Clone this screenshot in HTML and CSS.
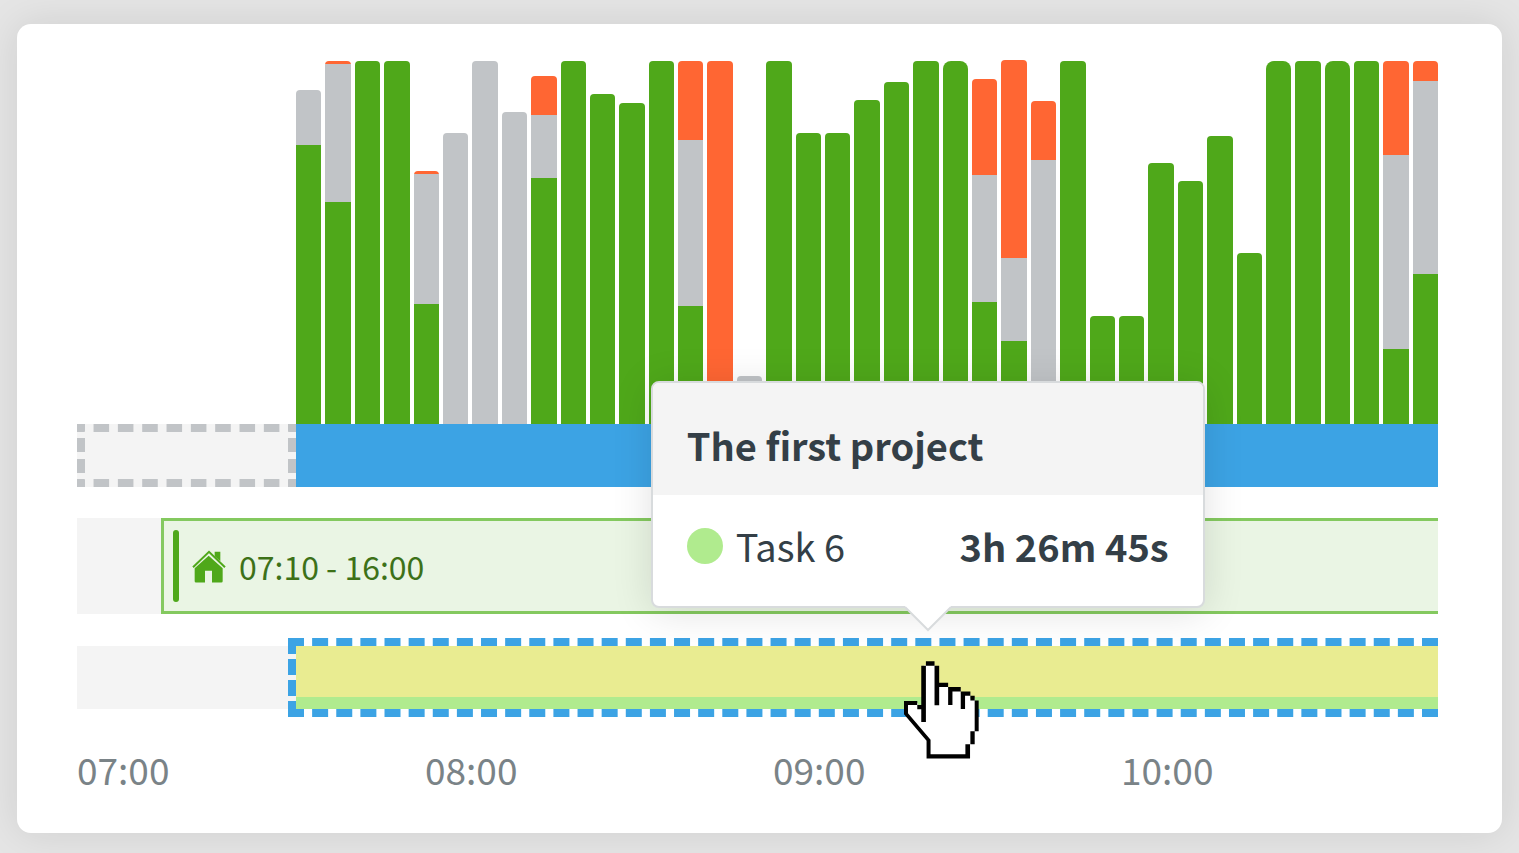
FILE: index.html
```html
<!DOCTYPE html>
<html lang="en">
<head>
    <meta charset="UTF-8">
    <meta name="viewport" content="width=device-width, initial-scale=1.0">
    <title>Timeline</title>
    <link rel="stylesheet" href="styles.css">
</head>
<body>

<main class="card">
    <div class="activity">
        <div class="idle"></div>
        <div class="tracked">
            <div class="bars" id="bars"></div>
            <div class="computer-time"></div>
        </div>
    </div>

    <div class="schedule">
        <div class="shift">
            <span class="shift-mark"></span>
            <svg class="home-icon" viewBox="0 0 102 98" aria-hidden="true">
                <path d="M3 51 L51 5 L99 51" fill="none" stroke="#4fa81a" stroke-width="6"/>
                <path d="M68 5 H85 V33 L68 18 Z"/>
                <path d="M8 54 L50 17 L92 54 V93 Q92 97 88 97 H60 V62 H39 V97 H12 Q8 97 8 93 Z"/>
            </svg>
            <span class="shift-time">07:10 - 16:00</span>
        </div>
    </div>

    <div class="tasks">
        <div class="task-range">
            <div class="task-main"></div>
            <div class="task-extra"></div>
        </div>

        <div class="tooltip">
            <h2>The first project</h2>
            <div class="tooltip-row">
                <span class="dot"></span>
                <span>Task 6</span>
                <strong>3h 26m 45s</strong>
            </div>
            <svg class="tooltip-arrow" viewBox="0 0 46 28" aria-hidden="true">
                <path class="arrow-fill" d="M0 0 H46 V2 L23 26 L0 2 Z"/>
                <path class="arrow-line" d="M0 2 L23 25 L46 2"/>
            </svg>
        </div>

        <svg class="pointer" viewBox="0 0 226 294" aria-hidden="true">
            <path fill="#fff" d="M66 12 H94 V70 H133 V84 H171 V98 H200 V112 H214 V211 H202 V250 H190 V286 H74 V240 L8 158 V126 H42 V138 H60 V12 Z"/>
            <path d="M66 0h26v14h-26z M52 14h14v169h-14z M92 14h14v119h-14z M106 65h27v13h-27z M133 78h38v13h-25v41h-13z M171 91h29v13h-16v40h-13z M200 104h13v14h-13z M213 118h12v93h-12z M200 211h13v39h-13z M185 250h14v43h-131v-53l-68-80v-40h40v12h-28v25l68 80v43h105z M40 132h13v13h-13z"/>
        </svg>
    </div>

    <div class="axis">
        <time>07:00</time>
        <time>08:00</time>
        <time>09:00</time>
        <time>10:00</time>
    </div>
</main>

<script src="script.js"></script>
</body>
</html>
```
FILE: styles.css
```css
* {
    margin: 0;
    padding: 0;
    box-sizing: border-box;
}

body {
    font-family: "Noto Sans CJK SC", "Open Sans", sans-serif;
    background-color: #e5e5e5;
    color: #343f47;
    padding: 24px 17px 20px;
}

.card {
    background-color: #fff;
    border-radius: 14px;
    padding: 36px 64px 32px 60px;
    box-shadow: 0 0 40px rgba(0, 0, 0, 0.1);
}

/* Activity chart */
.activity {
    display: grid;
    grid-template-columns: 219fr 1142fr;
    align-items: end;
}

/* Dashed frame with half dashes in the corners */
.idle {
    --dash-x: linear-gradient(90deg, #c1c4c7 33%, transparent 33% 67%, #c1c4c7 67%);
    --dash-y: linear-gradient(#c1c4c7 33%, transparent 33% 67%, #c1c4c7 67%);
    height: 63px;
    background-color: #f4f4f4;
    background-image: var(--dash-x), var(--dash-x), var(--dash-y), var(--dash-y);
    background-position: 0 0, 0 100%, 0 0, 100% 0;
    background-size: 24px 8px, 24px 8px, 8px 21px, 8px 21px;
    background-repeat: round no-repeat, round no-repeat, no-repeat round, no-repeat round;
}

.bars {
    display: flex;
    align-items: flex-end;
    gap: 4px;
    height: 364px;
}

.bar {
    flex: 1;
    display: flex;
    flex-direction: column;
    border-radius: 4px 4px 0 0;
    overflow: hidden;
}

.bar-round {
    border-radius: 8px 8px 0 0;
}

.productive {
    background-color: #4fa81a;
}

.neutral {
    background-color: #c1c4c7;
}

.unproductive {
    background-color: #ff6633;
}

.computer-time {
    height: 63px;
    background-color: #3ca3e4;
}

/* Schedule */
.schedule {
    display: grid;
    grid-template-columns: 84fr 1277fr;
    margin-top: 31px;
    background-color: #f4f4f4;
}

.shift {
    grid-column: 2;
    display: flex;
    align-items: center;
    height: 96px;
    padding: 9px;
    border: 3px solid #84c95f;
    border-right: 0;
    background-color: #eaf5e4;
}

.shift-mark {
    width: 6px;
    height: 72px;
    border-radius: 3px;
    background-color: #4fa81a;
}

.home-icon {
    width: 34px;
    height: 33px;
    margin: 0 13px;
    fill: #4fa81a;
}

.shift-time {
    font-size: 32px;
    line-height: 40px;
    color: #3d7118;
}

/* Tasks */
.tasks {
    position: relative;
    display: grid;
    grid-template-columns: 219fr 1142fr;
    height: 63px;
    margin-top: 32px;
    background-color: #f4f4f4;
}

.task-range {
    grid-column: 2;
    display: flex;
    flex-direction: column;
    margin: -8px 0 -8px -8px;
    border: 8px dashed #3ca3e4;
    border-right: 0;
    background-color: #fff;
    background-clip: padding-box;
}

.task-main {
    flex: 1;
    background-color: #e9ec91;
}

.task-extra {
    height: 12px;
    background-color: #b0eb8e;
}

/* Tooltip */
.tooltip {
    position: absolute;
    left: 62.5%;
    bottom: calc(100% + 38px);
    width: 554px;
    transform: translateX(-50%);
    background-color: #fff;
    border: 2px solid #d8dbdd;
    border-radius: 8px;
    box-shadow: 0 4px 40px rgba(0, 0, 0, 0.12);
}

.tooltip h2 {
    padding: 38px 34px 26px;
    font-size: 38px;
    line-height: 48px;
    background-color: #f4f4f4;
    border-radius: 6px 6px 0 0;
}

.tooltip-row {
    display: flex;
    align-items: center;
    gap: 13px;
    padding: 27px 34px 36px;
    font-size: 38px;
    line-height: 48px;
}

.tooltip-row strong {
    margin-left: auto;
}

.dot {
    width: 36px;
    height: 36px;
    border-radius: 50%;
    background-color: #b0eb8e;
}

.tooltip-arrow {
    position: absolute;
    left: calc(50% - 23px);
    top: calc(100% - 1px);
    width: 46px;
    height: 28px;
}

.arrow-fill {
    fill: #fff;
}

.arrow-line {
    fill: none;
    stroke: #d8dbdd;
    stroke-width: 2;
}

.pointer {
    position: absolute;
    left: 60.8%;
    top: 15px;
    width: 75px;
    height: 98px;
}

/* Time axis */
.axis {
    display: grid;
    grid-template-columns: 348fr 348fr 348fr 317fr;
    margin-top: 36px;
    padding-bottom: 8px;
    font-size: 37px;
    line-height: 48px;
    color: #7a8387;
}
```
FILE: script.js
```js
// Activity per 5 minutes: [productive, neutral, unproductive]
const scale = 364;
const slots = [
    [279, 55, 0], [222, 138, 3], [363, 0, 0], [363, 0, 0], [120, 130, 3],
    [0, 291, 0], [0, 363, 0], [0, 312, 0], [246, 63, 39], [363, 0, 0],
    [330, 0, 0], [321, 0, 0], [363, 0, 0], [118, 166, 79], [0, 0, 363],
    [0, 48, 0], [363, 0, 0], [291, 0, 0], [291, 0, 0], [324, 0, 0],
    [342, 0, 0], [363, 0, 0], [363, 0, 0], [122, 127, 96], [83, 83, 198],
    [0, 264, 59], [363, 0, 0], [108, 0, 0], [108, 0, 0], [261, 0, 0],
    [243, 0, 0], [288, 0, 0], [171, 0, 0], [363, 0, 0], [363, 0, 0],
    [363, 0, 0], [363, 0, 0], [75, 194, 94], [150, 193, 20]
];
const rounded = [22, 33, 35];
const names = ['productive', 'neutral', 'unproductive'];
const bars = document.getElementById('bars');

slots.forEach((slot, i) => {
    const total = slot[0] + slot[1] + slot[2];
    const bar = document.createElement('div');
    bar.className = rounded.includes(i) ? 'bar bar-round' : 'bar';
    bar.style.height = `${total / scale * 100}%`;

    // Stack from the top: unproductive, neutral, productive
    for (let k = 2; k >= 0; k--) {
        if (!slot[k]) continue;
        const part = document.createElement('div');
        part.className = names[k];
        part.style.height = `${slot[k] / total * 100}%`;
        bar.appendChild(part);
    }
    bars.appendChild(bar);
});
```
